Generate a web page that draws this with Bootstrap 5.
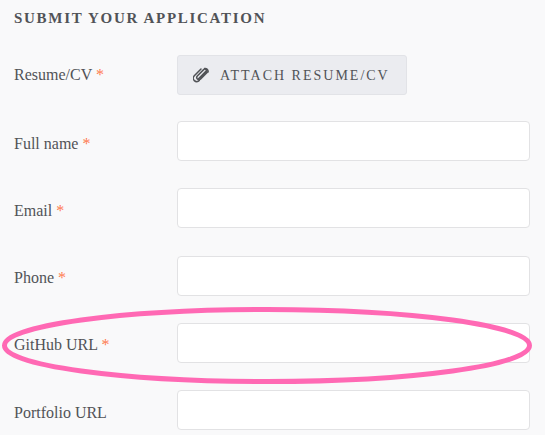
<!DOCTYPE html>
<html lang="en">
<head>
<meta charset="utf-8">
<title>Submit your application</title>
<link href="https://cdn.jsdelivr.net/npm/bootstrap@5.3.0/dist/css/bootstrap.min.css" rel="stylesheet">
<style>
html, body { height: 100%; overflow: hidden; }
body { background: #f9f9fa; font-family: "Liberation Serif", "Times New Roman", serif; color: #515357; font-size: 14px; position: relative; }
.apply-form { padding: 10px 15px 0 14px; }
.apply-title { font-size: 15px; font-weight: 700; letter-spacing: 1.7px; line-height: 17px; margin: 0 0 28px; color: #515357; }
.apply-row { height: 40px; margin-bottom: 27.3px; align-items: center; }
.apply-row:last-child { margin-bottom: 0; }
.apply-row.first { margin-bottom: 26px; }
.apply-label { width: 163px; flex: none; margin: 0; font-size: 16px; padding-top: 5px; }
.apply-row.first .apply-label { padding-top: 0; }
.req { color: #ff794f; }
.apply-input { height: 40px; border: 1px solid #e2e2e4; border-radius: 4px; background: #fff; width: 353px; flex: none; }
.attach-btn { height: 40px; width: 230px; background: #ebecf0; border: 1px solid #e2e3e7; border-radius: 3px; color: #515357; font-size: 14px; letter-spacing: 2px; padding: 0 0 0 15px; gap: 11px; }
.attach-btn:hover { background: #ebecf0; color: #515357; border-color: #e2e3e7; }
.highlight-ring { position: absolute; left: 0; top: 305px; width: 545px; height: 82px; pointer-events: none; }
</style>
</head>
<body>
<form class="apply-form">
  <h4 class="apply-title text-uppercase">Submit your application</h4>
  <div class="apply-row first d-flex">
    <label class="apply-label">Resume/CV <span class="req">*</span></label>
    <button type="button" class="btn attach-btn d-flex align-items-center text-uppercase">
      <svg width="16" height="16" viewBox="0 0 16 16" fill="none" stroke="#515357" stroke-width="1.5" stroke-linecap="round" stroke-linejoin="round"><path d="M14.6 4.9 7.4 12.1a2.2 2.2 0 0 1-3.1-3.1l6.6-6.6a1.3 1.3 0 0 1 2 2L5.8 11.5M11.6 1.6a3 3 0 0 1 3.5 3.4M6.3 13.6a3.5 3.5 0 0 1-5-4.9L8 2"/></svg>
      <span>Attach Resume/CV</span>
    </button>
  </div>
  <div class="apply-row d-flex">
    <label class="apply-label" for="f1">Full name <span class="req">*</span></label>
    <input id="f1" class="form-control apply-input" type="text">
  </div>
  <div class="apply-row d-flex">
    <label class="apply-label" for="f2">Email <span class="req">*</span></label>
    <input id="f2" class="form-control apply-input" type="text">
  </div>
  <div class="apply-row d-flex">
    <label class="apply-label" for="f3">Phone <span class="req">*</span></label>
    <input id="f3" class="form-control apply-input" type="text">
  </div>
  <div class="apply-row d-flex">
    <label class="apply-label" for="f4">GitHub URL <span class="req">*</span></label>
    <input id="f4" class="form-control apply-input" type="text">
  </div>
  <div class="apply-row d-flex">
    <label class="apply-label" for="f5">Portfolio URL</label>
    <input id="f5" class="form-control apply-input" type="text">
  </div>
</form>
<svg class="highlight-ring" viewBox="0 0 545 82" fill="none"><ellipse cx="267" cy="40.5" rx="262.5" ry="36" stroke="#ff69b4" stroke-width="5"/></svg>
<script src="https://cdn.jsdelivr.net/npm/bootstrap@5.3.0/dist/js/bootstrap.bundle.min.js"></script>
</body>
</html>
